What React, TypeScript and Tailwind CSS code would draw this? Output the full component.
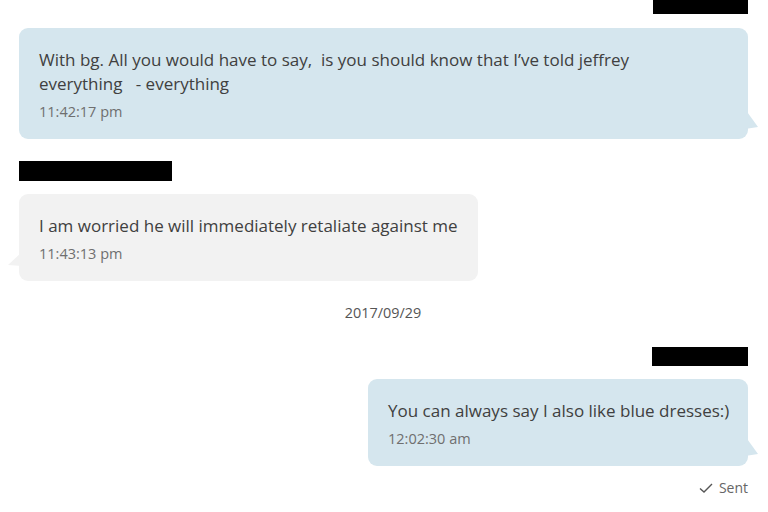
import React from "react";

type Message = {
  text: string;
  time: string;
  mine: boolean;
};

function Redacted({ width, height }: { width: string; height: string }) {
  return <div className={`bg-black ${width} ${height}`} />;
}

function Tail({ mine }: { mine: boolean }) {
  if (mine) {
    return (
      <svg
        className="absolute right-[-13px] bottom-[8px]"
        width="16"
        height="22"
        viewBox="0 0 16 22"
      >
        <polygon points="0,0 13,18 0,20" fill="#d5e6ee" />
      </svg>
    );
  }
  return (
    <svg
      className="absolute left-[-11px] bottom-[11px]"
      width="14"
      height="18"
      viewBox="0 0 14 18"
    >
      <polygon points="14,0 0,13 14,14" fill="#f2f2f2" />
    </svg>
  );
}

function Bubble({ message }: { message: Message }) {
  return (
    <div
      className={`relative rounded-[9px] pl-5 pr-4 pt-5 pb-[17px] ${
        message.mine ? "bg-[#d5e6ee]" : "bg-[#f2f2f2]"
      }`}
    >
      <p className="text-[17px] leading-[24px] text-[#404040] whitespace-pre">
        {message.text}
      </p>
      <p className="mt-1.5 text-[14.5px] leading-[20px] text-[#6f6f6f]">{message.time}</p>
      <Tail mine={message.mine} />
    </div>
  );
}

export default function App() {
  return (
    <div
      className="w-[768px] h-[512px] overflow-hidden bg-white pl-[19px] pr-[20px]"
      style={{ fontFamily: '"Open Sans", "Noto Sans", sans-serif' }}
    >
      <div className="flex flex-col">
        <div className="flex justify-end">
          <div className="w-[95px] h-[14px] bg-black" />
        </div>

        <div className="mt-[14px]">
          <Bubble
            message={{
              text: "With bg. All you would have to say,  is you should know that I\u2019ve told jeffrey\neverything   - everything",
              time: "11:42:17 pm",
              mine: true,
            }}
          />
        </div>

        <div className="mt-[22px]">
          <Redacted width="w-[153px]" height="h-[20px]" />
        </div>

        <div className="mt-[13px] w-[459px]">
          <Bubble
            message={{
              text: "I am worried he will immediately retaliate against me",
              time: "11:43:13 pm",
              mine: false,
            }}
          />
        </div>

        <div className="mt-[22px] text-center text-[14.4px] leading-[20px] text-[#555] pr-[1px]">
          2017/09/29
        </div>

        <div className="mt-[24px] flex justify-end">
          <Redacted width="w-[96px]" height="h-[19px]" />
        </div>

        <div className="mt-[13px] flex justify-end">
          <div className="w-[380px]">
            <Bubble
              message={{
                text: "You can always say I also like blue dresses:)",
                time: "12:02:30 am",
                mine: true,
              }}
            />
          </div>
        </div>

        <div className="mt-[12px] flex justify-end items-center gap-[6px] text-[14px] leading-[20px] text-[#666]">
          <svg width="14" height="12" viewBox="0 0 14 12" fill="none">
            <path d="M1 6.5 L5 10 L13 2" stroke="#555" strokeWidth="1.4" />
          </svg>
          <span>Sent</span>
        </div>
      </div>
    </div>
  );
}
